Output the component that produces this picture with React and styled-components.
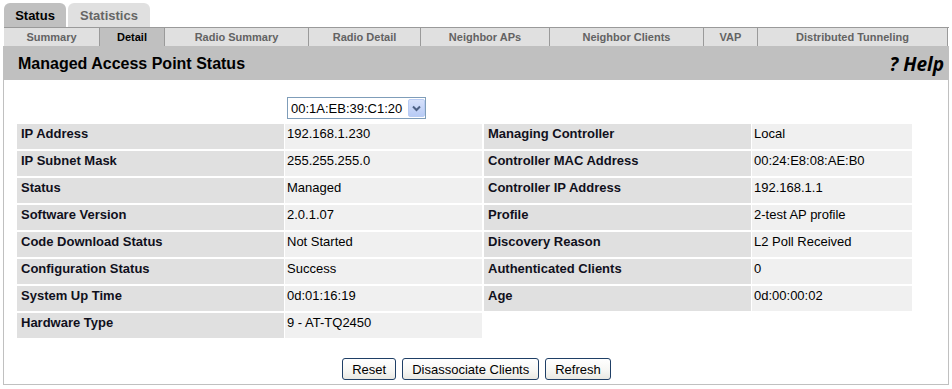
import React from 'react';
import styled, { createGlobalStyle } from 'styled-components';

const Global = createGlobalStyle`
  html, body { margin: 0; padding: 0; background: #ffffff; }
  body { font-family: "Liberation Sans", Arial, sans-serif; }
`;

const Page = styled.div`
  width: 946px;
  margin-left: 3px;
`;

const TabBar = styled.div`
  display: flex;
  gap: 2px;
  padding: 3px 0 0 1px;
  height: 24px;
`;

const Tab = styled.div`
  width: ${p => p.$w}px;
  height: 24px;
  border-radius: 6px 6px 0 0;
  background: ${p => (p.$active ? '#c0c0c0' : '#e0e0e0')};
  color: ${p => (p.$active ? '#000000' : '#666666')};
  font: bold 13px "Liberation Sans", Arial, sans-serif;
  display: flex;
  align-items: center;
  justify-content: center;
  padding-top: 1px;
  box-sizing: border-box;
`;

const SubTabBar = styled.div`
  display: flex;
  margin-left: 1px;
  border-top: 1px solid #9a9a9a;
  height: 18px;
`;

const SubTab = styled.div`
  width: ${p => p.$w}px;
  box-sizing: border-box;
  height: 18px;
  border-right: 1px solid #9a9a9a;
  background: ${p => (p.$active ? '#c0c0c0' : '#e0e0e0')};
  color: ${p => (p.$active ? '#000000' : '#636363')};
  font: bold 11px "Liberation Sans", Arial, sans-serif;
  display: flex;
  align-items: center;
  justify-content: center;
`;

const Header = styled.div`
  height: 34px;
  background: #c0c0c0;
  display: flex;
  align-items: center;
  justify-content: space-between;
  padding: 0 5px 0 15px;
`;

const Title = styled.h1`
  margin: 0;
  padding-top: 2px;
  font: bold 16px "Liberation Sans", Arial, sans-serif;
  color: #000000;
`;

const Help = styled.a`
  font: italic bold 19px "Open Sans", "DejaVu Sans", sans-serif;
  color: #000000;
  text-decoration: none;
  padding-top: 2px;
`;

const Content = styled.div`
  border: 1px solid #c0c0c0;
  border-top: none;
  padding: 17px 0 4px 13px;
`;

const SelectRow = styled.div`
  display: flex;
  padding-left: 270px;
  height: 22px;
  margin-bottom: 5px;
`;

const SelectBox = styled.div`
  width: 139px;
  height: 22px;
  box-sizing: border-box;
  border: 1px solid #7f9db9;
  background: #ffffff;
  display: flex;
  align-items: stretch;
`;

const NativeSelect = styled.select`
  appearance: none;
  -webkit-appearance: none;
  border: none;
  outline: none;
  background: transparent;
  flex: 1;
  min-width: 0;
  padding: 0 0 0 3px;
  font: 13px "Liberation Sans", Arial, sans-serif;
  color: #000000;
`;

const ArrowBox = styled.div`
  width: 17px;
  margin: 1px 0 1px 0;
  box-sizing: border-box;
  border: 1px solid #b9ccf4;
  border-radius: 2px;
  background: linear-gradient(#d6e1fb, #b8cbf5);
  display: flex;
  align-items: center;
  justify-content: center;
`;

const Tables = styled.div`
  display: flex;
  gap: 2px;
  align-items: flex-start;
`;

const InfoGrid = styled.div`
  display: grid;
  grid-template-columns: 267px ${p => p.$value}px;
  column-gap: 1px;
  row-gap: 2px;
  grid-auto-rows: 25px;
`;

const Label = styled.div`
  background: #e0e0e0;
  padding: 2px 4px 0;
  font: bold 13px/15px "Liberation Sans", Arial, sans-serif;
  color: #10101c;
`;

const Value = styled.div`
  background: #f0f0f0;
  padding: 2px 2px 0;
  font: 13px/15px "Liberation Sans", Arial, sans-serif;
  color: #000000;
`;

const ButtonRow = styled.div`
  display: flex;
  justify-content: center;
  gap: 6px;
  margin-top: 20px;
  padding-right: 12px;
`;

const Button = styled.button`
  height: 22px;
  padding: 0 9px;
  border: 1px solid #1f3f66;
  border-radius: 3px;
  background: linear-gradient(#ffffff 0%, #f6f6f3 60%, #e9e8e2 100%);
  font: 13px "Liberation Sans", Arial, sans-serif;
  color: #000000;
  cursor: pointer;
`;

const topTabs = [
  { name: 'Status', w: 62, active: true },
  { name: 'Statistics', w: 82 },
];

const subTabs = [
  { name: 'Summary', w: 96 },
  { name: 'Detail', w: 65, active: true },
  { name: 'Radio Summary', w: 144 },
  { name: 'Radio Detail', w: 112 },
  { name: 'Neighbor APs', w: 129 },
  { name: 'Neighbor Clients', w: 154 },
  { name: 'VAP', w: 54 },
  { name: 'Distributed Tunneling', w: 190 },
];

const leftRows = [
  ['IP Address', '192.168.1.230'],
  ['IP Subnet Mask', '255.255.255.0'],
  ['Status', 'Managed'],
  ['Software Version', '2.0.1.07'],
  ['Code Download Status', 'Not Started'],
  ['Configuration Status', 'Success'],
  ['System Up Time', '0d:01:16:19'],
  ['Hardware Type', '9 - AT-TQ2450'],
];

const rightRows = [
  ['Managing Controller', 'Local'],
  ['Controller MAC Address', '00:24:E8:08:AE:B0'],
  ['Controller IP Address', '192.168.1.1'],
  ['Profile', '2-test AP profile'],
  ['Discovery Reason', 'L2 Poll Received'],
  ['Authenticated Clients', '0'],
  ['Age', '0d:00:00:02'],
];

function Rows({ rows }) {
  return rows.map(([k, v]) => (
    <React.Fragment key={k}>
      <Label>{k}</Label>
      <Value>{v}</Value>
    </React.Fragment>
  ));
}

export default function App() {
  return (
    <>
      <Global />
      <Page>
        <TabBar>
          {topTabs.map(t => (
            <Tab key={t.name} $w={t.w} $active={t.active}>{t.name}</Tab>
          ))}
        </TabBar>
        <SubTabBar>
          {subTabs.map(t => (
            <SubTab key={t.name} $w={t.w} $active={t.active}>{t.name}</SubTab>
          ))}
        </SubTabBar>
        <Header>
          <Title>Managed Access Point Status</Title>
          <Help href="#">? Help</Help>
        </Header>
        <Content>
          <SelectRow>
            <SelectBox>
              <NativeSelect defaultValue="00:1A:EB:39:C1:20">
                <option>00:1A:EB:39:C1:20</option>
              </NativeSelect>
              <ArrowBox>
                <svg width="9" height="7" viewBox="0 0 9 7">
                  <path d="M1 1.5 L4.5 5 L8 1.5" fill="none" stroke="#4d6185" strokeWidth="2" />
                </svg>
              </ArrowBox>
            </SelectBox>
          </SelectRow>
          <Tables>
            <InfoGrid $value={197}>
              <Rows rows={leftRows} />
            </InfoGrid>
            <InfoGrid $value={160}>
              <Rows rows={rightRows} />
            </InfoGrid>
          </Tables>
          <ButtonRow>
            <Button>Reset</Button>
            <Button>Disassociate Clients</Button>
            <Button>Refresh</Button>
          </ButtonRow>
        </Content>
      </Page>
    </>
  );
}
